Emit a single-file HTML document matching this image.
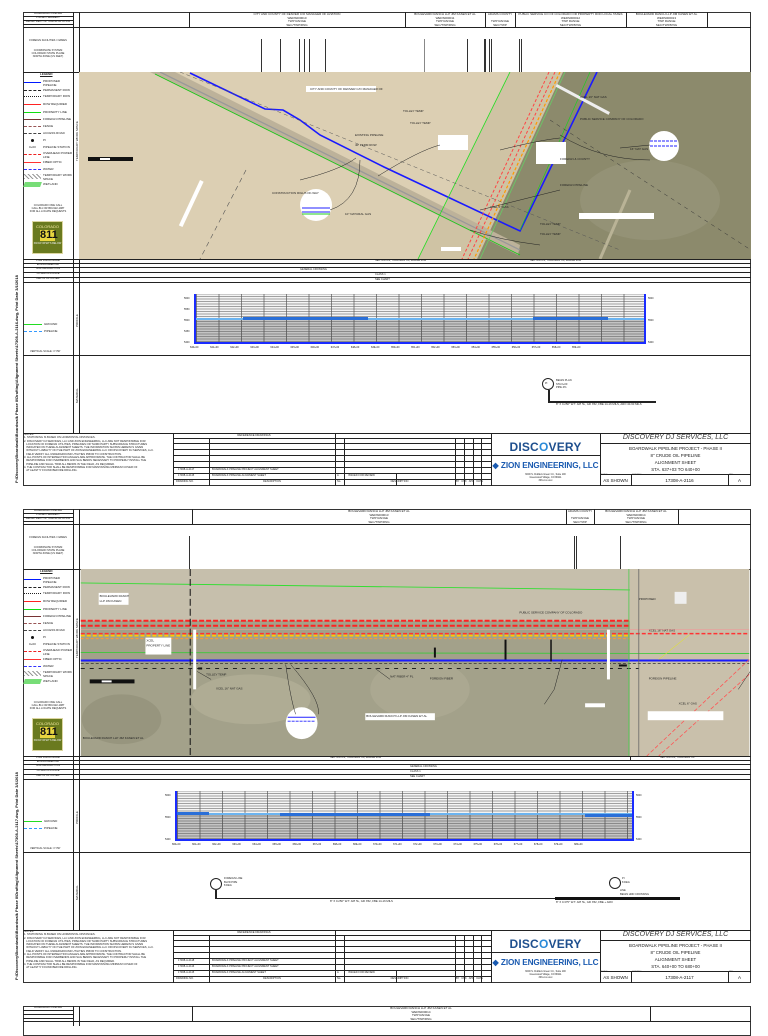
<!DOCTYPE html>
<html><head><meta charset="utf-8">
<style>
*{margin:0;padding:0;box-sizing:border-box}
body{width:768px;height:1024px;background:#fff;position:relative;overflow:hidden;font-family:"Liberation Sans",sans-serif;color:#111}
.sh{position:absolute;left:0;width:768px;height:480px}
.a{position:absolute}
.hl{position:absolute;height:0;border-top:1px solid #222}
.vl{position:absolute;width:0;border-left:1px solid #222}
.t{position:absolute;font-size:3px;line-height:3.6px;white-space:nowrap;color:#222}
.c{text-align:center}
.frame{position:absolute;left:23px;top:1px;width:728px;height:474px;border:1.5px solid #333}
.prof{position:absolute;height:50px;background:
 repeating-linear-gradient(90deg,rgba(0,0,0,.45) 0 1px,transparent 1px 22.5px),
 linear-gradient(#f4f4f4 0 50%,#c4c4c4 50% 100%);border-left:2px solid #1a2cff;border-right:2px solid #1a2cff;border-bottom:2px solid #1a2cff}
.prof:before{content:"";position:absolute;inset:0;background:repeating-linear-gradient(0deg,rgba(90,90,90,.55) 0 1px,transparent 1px 2.5px)}
.disc{font-weight:bold;color:#1e4f8e;font-size:12px;letter-spacing:.2px;white-space:nowrap}
.zion{font-weight:bold;color:#1a5ab0;font-size:8.2px;white-space:nowrap;letter-spacing:-.1px}
.rot{position:absolute;transform:rotate(-90deg);transform-origin:left top;font-size:3px;white-space:nowrap}
</style></head><body>

<!-- ===================== SHEET 1 ===================== -->
<div class="sh" style="top:11px">
 <div class="frame"></div>
 <div class="vl" style="left:73px;top:1px;height:421px"></div>
 <div class="vl" style="left:79px;top:1px;height:421px"></div>
 <div class="hl" style="left:23px;top:16px;width:728px"></div>
 <div class="hl" style="left:23px;top:61px;width:728px"></div>
 <div class="hl" style="left:23px;top:248px;width:728px;border-top-width:1.5px"></div>
 <div class="hl" style="left:23px;top:252px;width:728px"></div>
 <div class="hl" style="left:23px;top:256px;width:728px"></div>
 <div class="hl" style="left:23px;top:261px;width:728px"></div>
 <div class="hl" style="left:23px;top:266px;width:728px"></div>
 <div class="hl" style="left:23px;top:271px;width:728px;border-top-width:1.5px"></div>
 <div class="hl" style="left:23px;top:344px;width:728px;border-top-width:1.5px"></div>
 <div class="hl" style="left:23px;top:422px;width:728px;border-top-width:1.5px"></div>
 <div class="hl" style="left:23px;top:5px;width:50px"></div>
 <div class="hl" style="left:23px;top:9px;width:50px"></div>
 <div class="hl" style="left:23px;top:13px;width:50px"></div>
 <div class="t c" style="left:23px;top:1px;width:50px;font-size:2.5px">BOARDWALK PIPELINE</div>
 <div class="t c" style="left:23px;top:5px;width:50px;font-size:2.5px">PHASE II SEGMENT</div>
 <div class="t c" style="left:23px;top:9px;width:50px;font-size:2.5px">DEPARTMENT OF TRANSPORTATION</div>
 <div class="t c" style="left:23px;top:28px;width:50px;font-size:2.6px">FOREIGN FACILITIES / NAMES</div>
 <div class="t c" style="left:23px;top:38px;width:50px;font-size:2.6px;line-height:3.2px">COORDINATE SYSTEM<br>COLORADO STATE PLANE<br>NORTH ZONE (US FEET)</div>
 <div class="vl" style="left:189px;top:1px;height:15px"></div>
 <div class="vl" style="left:405px;top:1px;height:15px"></div>
 <div class="vl" style="left:485px;top:1px;height:15px"></div>
 <div class="vl" style="left:515px;top:1px;height:15px"></div>
 <div class="vl" style="left:626px;top:1px;height:15px"></div>
 <div class="vl" style="left:707px;top:1px;height:15px"></div>
 <div class="t c" style="left:189px;top:2px;width:216px">CITY AND COUNTY OF DENVER C/O MANAGER OF AVIATION<br>WEDS000010<br>TWP RANGE<br>SEC/TWP/RNG</div>
 <div class="t c" style="left:405px;top:2px;width:80px">BOULEVARD RANCH LLP JIM KASEN ET AL<br>WEDS000011<br>TWP RANGE<br>SEC/TWP/RNG</div>
 <div class="t c" style="left:485px;top:2px;width:30px">ADAMS COUNTY<br><br>TWP RANGE<br>SEC/TWP</div>
 <div class="t c" style="left:515px;top:2px;width:111px">PUBLIC SERVICE CO OF COLORADO OR PROPERTY ROD LOCAL TAXES<br>WEDS000012<br>TWP RANGE<br>SEC/TWP/RNG</div>
 <div class="t c" style="left:626px;top:2px;width:81px">BOULEVARD RANCH LLP JIM KASEN ET AL<br>WEDS000013<br>TWP RANGE<br>SEC/TWP/RNG</div>
 <div class="a" style="left:261px;top:28px;width:1px;height:33px;background:#333"></div>
 <div class="a" style="left:280px;top:28px;width:1px;height:33px;background:#333"></div>
 <div class="a" style="left:299px;top:28px;width:1px;height:33px;background:#333"></div>
 <div class="a" style="left:304px;top:28px;width:1px;height:33px;background:#333"></div>
 <div class="a" style="left:309px;top:28px;width:1px;height:33px;background:#333"></div>
 <div class="a" style="left:325px;top:28px;width:1px;height:33px;background:#333"></div>
 <div class="a" style="left:424px;top:28px;width:1px;height:33px;background:#888"></div>
 <div class="a" style="left:467px;top:28px;width:1px;height:33px;background:#333"></div>
 <div class="a" style="left:484px;top:28px;width:2px;height:33px;background:#333"></div>
 <div class="a" style="left:489px;top:28px;width:4px;height:33px;background:repeating-linear-gradient(90deg,#333 0 1px,transparent 1px 2px)"></div>
 <div class="a" style="left:519px;top:28px;width:4px;height:33px;background:repeating-linear-gradient(90deg,#333 0 1px,transparent 1px 2px)"></div>
 <div class="t" style="left:40px;top:62px;font-weight:bold;text-decoration:underline">LEGEND</div>
 <div class="a" style="left:24px;top:71px;width:17px;height:1px;background:#0018ff"></div><div class="t" style="left:43px;top:69px">PROPOSED<br>PIPELINE</div>
 <div class="a" style="left:24px;top:79px;width:17px;height:1px;border-top:1px dashed #222"></div><div class="t" style="left:43px;top:78px">PERMANENT ROW</div>
 <div class="a" style="left:24px;top:85px;width:17px;height:1px;border-top:1px dotted #222"></div><div class="t" style="left:43px;top:84px">TEMPORARY ROW</div>
 <div class="a" style="left:24px;top:93px;width:17px;height:1px;background:#f22"></div><div class="t" style="left:43px;top:92px">ROW REQUIRED</div>
 <div class="a" style="left:24px;top:101px;width:17px;height:1px;background:#1d1"></div><div class="t" style="left:43px;top:100px">PROPERTY LINE</div>
 <div class="a" style="left:24px;top:108px;width:17px;height:1px;background:#733"></div><div class="t" style="left:43px;top:107px">FOREIGN PIPELINE</div>
 <div class="a" style="left:24px;top:115px;width:17px;height:1px;border-top:1px dashed #955"></div><div class="t" style="left:43px;top:114px">FENCE</div>
 <div class="a" style="left:24px;top:122px;width:17px;height:1px;border-top:1px dashed #444"></div><div class="t" style="left:43px;top:121px">ACCESS ROAD</div>
 <div class="a" style="left:31px;top:128px;width:3px;height:3px;background:#111;border-radius:50%"></div><div class="t" style="left:43px;top:128px">PI</div>
 <div class="t" style="left:29px;top:135px">0+00</div><div class="t" style="left:43px;top:135px">PIPELINE STATION</div>
 <div class="a" style="left:24px;top:143px;width:17px;height:1px;border-top:1px dashed #e22"></div><div class="t" style="left:43px;top:141px">OVERHEAD POWER<br>LINE</div>
 <div class="a" style="left:24px;top:151px;width:17px;height:1px;border-top:1px solid #f33"></div><div class="t" style="left:43px;top:150px">FIBER OPTIC</div>
 <div class="a" style="left:24px;top:158px;width:17px;height:1px;border-top:1px dashed #33f"></div><div class="t" style="left:43px;top:157px">WATER</div>
 <div class="a" style="left:24px;top:163px;width:17px;height:5px;background:repeating-linear-gradient(45deg,#999 0 1px,#fff 1px 3px)"></div><div class="t" style="left:43px;top:163px">TEMPORARY WORK<br>SPACE</div>
 <div class="a" style="left:24px;top:171px;width:17px;height:5px;background:#7d7;transform:skewX(-20deg)"></div><div class="t" style="left:43px;top:172px">WETLAND</div>
 <div class="t c" style="left:23px;top:193px;width:50px;font-size:2.6px;line-height:3.2px">COLORADO ONE CALL<br>CALL 811 OR 800-922-1987<br>FOR ALL LOCATE REQUESTS</div>
 <div class="a" style="left:32px;top:210px;width:31px;height:33px;background:#6a7a1f;border:1px solid #dcd6a0;color:#fff;text-align:center">
  <div style="font-size:4px;margin-top:2px;color:#f3e9a0">COLORADO</div>
  <div style="font-size:11px;font-weight:bold;color:#111;background:#e8d640;margin:1px 7px;line-height:11px">811</div>
  <div style="font-size:2.5px;color:#eee">KNOW WHAT'S BELOW</div>
 </div>
 <div class="rot" style="left:75px;top:150px">TEMPORARY WORK SPACE</div>
 <svg class="a" style="left:79px;top:61px" width="672" height="187" viewBox="79 72 672 187">
  <rect x="79" y="72" width="672" height="187" fill="#dccfb3"/>
  <polygon points="510,72 751,72 751,259 418,259" fill="#cfc3a4"/>
  <polygon points="563,72 751,72 751,259 477,259" fill="#8c8a6c"/>
  <ellipse cx="650" cy="200" rx="70" ry="40" fill="#97957a" opacity=".7"/>
  <line x1="630" y1="190" x2="600" y2="259" stroke="#b9b396" stroke-width="3"/>
  <polygon points="150,72 175,72 520,245 518,255" fill="#bdb29a"/>
  <line x1="160" y1="72" x2="520" y2="250" stroke="#999" stroke-width="1.3"/>
  <line x1="155" y1="74" x2="520" y2="255" stroke="#1c1" stroke-width=".8"/>
  <polyline points="190,73 265,109 283,110 300,120 320,135 384,167 520,231 597,72" fill="none" stroke="#1a1aff" stroke-width="1.6"/>
  <line x1="510" y1="72" x2="418" y2="259" stroke="#2d2" stroke-width=".8"/>
  <line x1="549" y1="72" x2="462" y2="259" stroke="#f44" stroke-width="1" stroke-dasharray="3 2"/>
  <line x1="555" y1="72" x2="468" y2="259" stroke="#f44" stroke-width="1" stroke-dasharray="3 2"/>
  <line x1="560" y1="72" x2="474" y2="259" stroke="#f90" stroke-width="1.2" stroke-dasharray="3 2"/>
  <line x1="565" y1="72" x2="480" y2="259" stroke="#6c6" stroke-width=".8"/>
  <line x1="590" y1="72" x2="520" y2="230" stroke="#2c2" stroke-width=".7"/>
  <line x1="550" y1="120" x2="751" y2="250" stroke="#333" stroke-width=".5" stroke-dasharray="4 4"/>
  <line x1="246" y1="170" x2="200" y2="259" stroke="#555" stroke-width=".6" stroke-dasharray="5 4"/>
  <line x1="180" y1="72" x2="620" y2="250" stroke="#555" stroke-width=".5" stroke-dasharray="4 3"/>
  <rect x="557" y="84" width="60" height="3" fill="#eee" transform="rotate(28 557 84)"/>
  <circle cx="316" cy="205" r="16" fill="#fff"/>
  <line x1="302" y1="208" x2="330" y2="208" stroke="#22f" stroke-width="1"/>
  <line x1="302" y1="212" x2="330" y2="212" stroke="#22f" stroke-width="1"/>
  <line x1="302" y1="214" x2="330" y2="214" stroke="#2c2" stroke-width="1"/>
  <circle cx="664" cy="146" r="15" fill="#fff"/>
  <line x1="650" y1="141" x2="678" y2="141" stroke="#22f" stroke-width="1" stroke-dasharray="3 1"/>
  <line x1="650" y1="146" x2="678" y2="146" stroke="#22f" stroke-width="1" stroke-dasharray="3 1"/>
  <rect x="88" y="157" width="45" height="4" fill="#111"/>
  <rect x="100" y="158" width="10" height="2" fill="#fff"/>
  <rect x="306" y="86" width="70" height="6" fill="#fff"/>
  <rect x="438" y="135" width="30" height="15" fill="#fff"/>
  <rect x="536" y="142" width="30" height="22" fill="#fff"/>
  <rect x="579" y="213" width="75" height="6" fill="#fff"/>
  <rect x="441" y="247" width="20" height="4" fill="#fff"/>
  <rect x="200" y="180" width="4" height="50" fill="#fff" transform="rotate(25 200 180)"/>
  <g stroke="#222" stroke-width=".5" fill="none">
   <path d="M300 180 Q340 170 356 158"/><path d="M330 210 Q360 200 360 160"/>
   <path d="M378 176 Q420 150 440 145"/><path d="M500 150 Q540 140 560 138"/>
   <path d="M560 135 Q600 160 650 160"/><path d="M620 148 L650 145"/>
   <path d="M480 210 Q520 200 560 190"/><path d="M470 230 Q500 240 540 245"/>
  </g>
  <g font-size="3" fill="#222" font-family="Liberation Sans">
   <text x="310" y="90">CITY AND COUNTY OF DENVER C/O MANAGER OF</text>
   <text x="403" y="112">TOLLEY TEMP</text><text x="410" y="124">TOLLEY TEMP</text>
   <text x="355" y="136">EXISTING PIPELINE</text><text x="355" y="146">40' PERM ROW</text>
   <text x="272" y="194">CONSTRUCTION RIGHT-OF-WAY</text><text x="345" y="215">10" NATURAL GAS</text>
   <text x="580" y="98">XCEL 16" NAT GAS</text><text x="580" y="120">PUBLIC SERVICE COMPANY OF COLORADO</text>
   <text x="560" y="160">FOREIGN &amp; COUNTY</text><text x="560" y="186">FOREIGN PIPELINE</text>
   <text x="540" y="225">TOLLEY TEMP</text><text x="540" y="235">TOLLEY TEMP</text>
   <text x="490" y="208">XCEL 6" GAS</text><text x="630" y="150">16" NAT GAS</text>
  </g>
 </svg>
 <div class="t c" style="left:23px;top:248px;width:50px;font-size:2.6px">PIPE DISCLOSURE</div>
 <div class="t c" style="left:23px;top:252px;width:50px;font-size:2.6px">ENVIRONMENTAL</div>
 <div class="t c" style="left:23px;top:256px;width:50px;font-size:2.6px">SOIL DESCRIPTION</div>
 <div class="t c" style="left:23px;top:261px;width:50px;font-size:2.6px">COVER DISTANCE</div>
 <div class="t c" style="left:23px;top:266px;width:50px;font-size:2.6px">DEPTH OF COVER</div>
 <div class="t" style="left:375px;top:248px;font-size:2.6px">SECTION 22, TOWNSHIP 3S, RANGE 66W</div>
 <div class="t" style="left:530px;top:248px;font-size:2.6px">SECTION 23, TOWNSHIP 3S, RANGE 66W</div>
 <div class="t" style="left:300px;top:257px;font-size:2.6px">GENERAL CROSSING</div>
 <div class="t" style="left:375px;top:262px;font-size:2.6px">CLASS 1</div>
 <div class="t" style="left:375px;top:267px;font-size:2.6px">SEE CHART</div>
 <div class="a" style="left:24px;top:313px;width:18px;height:1px;background:#2d2"></div><div class="t" style="left:44px;top:312px">GROUND</div>
 <div class="a" style="left:24px;top:320px;width:18px;height:1px;border-top:1.5px dashed #39f"></div><div class="t" style="left:44px;top:319px">PIPELINE</div>
 <div class="t" style="left:30px;top:339px;font-size:2.6px">VERTICAL SCALE: 1"=50'</div>
 <div class="rot" style="left:75px;top:316px">PROFILE</div>
 <div class="prof" style="left:194px;top:283px;width:452px"></div>
 <div class="a" style="left:196px;top:307px;width:448px;height:2px;background:#6cb4f0"></div>
 <div class="a" style="left:243px;top:306px;width:125px;height:2.5px;background:#2a6fd8"></div>
 <div class="a" style="left:533px;top:306px;width:75px;height:2.5px;background:#2a6fd8"></div>
 <div class="t" style="left:184px;top:286px;font-size:2.5px">5600</div><div class="t" style="left:184px;top:297px;font-size:2.5px">5550</div>
 <div class="t" style="left:184px;top:308px;font-size:2.5px">5500</div><div class="t" style="left:184px;top:319px;font-size:2.5px">5450</div>
 <div class="t" style="left:184px;top:330px;font-size:2.5px">5400</div>
 <div class="t" style="left:648px;top:286px;font-size:2.5px">5600</div><div class="t" style="left:648px;top:308px;font-size:2.5px">5500</div><div class="t" style="left:648px;top:330px;font-size:2.5px">5400</div>
 <div class="a" style="left:190px;top:335px;width:460px;font-size:2.5px;word-spacing:11px;white-space:nowrap">640+00 641+00 642+00 643+00 644+00 645+00 646+00 647+00 648+00 649+00 650+00 651+00 652+00 653+00 654+00 655+00 656+00 657+00 658+00 659+00</div>
 <div class="rot" style="left:75px;top:392px">MATERIAL</div>
 <div class="a" style="left:542px;top:367px;width:12px;height:12px;border:1.3px solid #222;border-radius:50%;background:#fff"></div>
 <div class="t" style="left:545px;top:371px;font-size:2.5px">PI</div>
 <div class="t" style="left:556px;top:368px;font-size:2.6px">BEGIN PLAN<br>STA 0+00<br>PIPE 4%</div>
 <div class="a" style="left:548px;top:379px;width:1.5px;height:12px;background:#222"></div>
 <div class="a" style="left:548px;top:390px;width:108px;height:1.5px;background:#222"></div>
 <div class="t" style="left:556px;top:392px;font-size:2.8px">8" X 0.250" W.T. API 5L, GR X52, FBE 14-16 MILS, ARO 40-60 MILS</div>
 <div class="vl" style="left:173px;top:422px;height:53px"></div>
 <div class="vl" style="left:209px;top:427px;height:48px"></div>
 <div class="vl" style="left:335px;top:422px;height:53px"></div>
 <div class="vl" style="left:344px;top:427px;height:48px"></div>
 <div class="vl" style="left:396px;top:462px;height:13px"></div>
 <div class="vl" style="left:455px;top:427px;height:48px"></div>
 <div class="vl" style="left:464px;top:427px;height:48px"></div>
 <div class="vl" style="left:473px;top:427px;height:48px"></div>
 <div class="vl" style="left:481px;top:427px;height:48px"></div>
 <div class="vl" style="left:491px;top:422px;height:53px;border-left-width:1.5px"></div>
 <div class="vl" style="left:600px;top:422px;height:53px;border-left-width:1.5px"></div>
 <div class="hl" style="left:173px;top:427px;width:318px"></div>
 <div class="hl" style="left:173px;top:432px;width:318px"></div>
 <div class="hl" style="left:173px;top:438px;width:318px"></div>
 <div class="hl" style="left:173px;top:444px;width:318px"></div>
 <div class="hl" style="left:173px;top:450px;width:318px"></div>
 <div class="hl" style="left:173px;top:456px;width:318px"></div>
 <div class="hl" style="left:173px;top:462px;width:318px"></div>
 <div class="hl" style="left:173px;top:468px;width:318px"></div>
 <div class="t" style="left:24px;top:422px;font-size:2.7px;line-height:3.3px">NOTES:<br>1. STATIONING IS BASED ON HORIZONTAL DISTANCES.<br>2. DISCOVERY DJ SERVICES, LLC AND ZION ENGINEERING, LLC ARE NOT RESPONSIBLE FOR<br>&nbsp;&nbsp;&nbsp;LOCATION OF FOREIGN UTILITIES, PIPELINES OR THIRD PARTY SUBSURFACE STRUCTURES<br>&nbsp;&nbsp;&nbsp;INDICATED ON THESE ALIGNMENT SHEETS. THE INFORMATION SHOWN HEREIN IS GIVEN<br>&nbsp;&nbsp;&nbsp;WITHOUT LIABILITY ON THE PART OF ZION ENGINEERING LLC OR DISCOVERY DJ SERVICES, LLC.<br>&nbsp;&nbsp;&nbsp;FIELD VERIFY ALL UNDERGROUND UTILITIES PRIOR TO CONSTRUCTION.<br>3. ALL POINTS OF INTERSECTION ANGLES ARE APPROXIMATE. THE CONTRACTOR SHALL BE<br>&nbsp;&nbsp;&nbsp;RESPONSIBLE FOR OVERBENDS AND SAG BENDS NECESSARY TO PROPERLY INSTALL THE<br>&nbsp;&nbsp;&nbsp;PIPELINE AND SHALL TRIM ALL BENDS IN THE FIELD, AS REQUIRED.<br>4. THE CONTRACTOR SHALL BE RESPONSIBLE FOR MAINTAINING MINIMUM COVER OF<br>&nbsp;&nbsp;&nbsp;AT LEAST 5' FOUND BEFORE DRILLING.</div>
 <div class="t c" style="left:173px;top:423px;width:162px;font-size:2.8px">REFERENCE DRAWINGS</div>
 <div class="t" style="left:178px;top:457px;font-size:2.6px">17308-A-2117</div><div class="t" style="left:212px;top:457px;font-size:2.6px">BOARDWALK PIPELINE PROJECT ALIGNMENT SHEET</div>
 <div class="t" style="left:178px;top:463px;font-size:2.6px">17308-A-2115</div><div class="t" style="left:212px;top:463px;font-size:2.6px">BOARDWALK PIPELINE ALIGNMENT SHEET</div>
 <div class="t" style="left:176px;top:469px;font-size:2.6px">DRAWING NO.</div><div class="t c" style="left:209px;top:469px;width:126px;font-size:2.6px">DESCRIPTION</div>
 <div class="t" style="left:337px;top:463px;font-size:2.6px">A</div><div class="t" style="left:348px;top:463px;font-size:2.6px">ISSUED FOR REVIEW</div>
 <div class="t" style="left:337px;top:469px;font-size:2.6px">No.</div><div class="t c" style="left:344px;top:469px;width:111px;font-size:2.6px">DESCRIPTION</div>
 <div class="t" style="left:456px;top:469px;font-size:2.5px">BY &nbsp;&nbsp;CHK &nbsp;&nbsp;APP &nbsp;&nbsp;&nbsp;DATE</div>
 <div class="hl" style="left:491px;top:444px;width:109px"></div>
 <div class="a disc" style="left:491px;top:429px;width:109px;text-align:center">DISC<span style="color:#2a8ad8">O</span>VERY</div>
 <div class="a zion" style="left:491px;top:449px;width:109px;text-align:center"><span style="color:#1a5ab0">&#9670;</span> ZION ENGINEERING, LLC</div>
 <div class="t c" style="left:491px;top:462px;width:109px;font-size:2.4px;line-height:3px">6000 S. Fiddlers Green Cir., Suite 100<br>Greenwood Village, CO 80111<br>303-xxx-xxxx</div>
 <div class="hl" style="left:600px;top:432px;width:151px"></div>
 <div class="hl" style="left:600px;top:463px;width:151px"></div>
 <div class="vl" style="left:631px;top:463px;height:12px"></div>
 <div class="vl" style="left:728px;top:463px;height:12px"></div>
 <div class="a" style="left:600px;top:423px;width:151px;text-align:center;font-size:7px;font-style:italic;color:#333">DISCOVERY DJ SERVICES, LLC</div>
 <div class="a" style="left:600px;top:434px;width:151px;text-align:center;font-size:4.4px;line-height:7px;color:#222">BOARDWALK PIPELINE PROJECT - PHASE II<br>8" CRUDE OIL PIPELINE<br>ALIGNMENT SHEET<br>STA. 637+03 TO 640+00</div>
 <div class="t" style="left:601px;top:463px;font-size:2px">SCALE</div><div class="t" style="left:632px;top:463px;font-size:2px">DRAWING</div><div class="t" style="left:729px;top:463px;font-size:2px">REV</div>
 <div class="a" style="left:600px;top:467px;width:31px;text-align:center;font-size:4.5px">AS SHOWN</div>
 <div class="a" style="left:631px;top:467px;width:97px;text-align:center;font-size:4.5px">17308-A-2116</div>
 <div class="a" style="left:728px;top:467px;width:23px;text-align:center;font-size:4.5px">A</div>
 <div class="rot" style="left:14px;top:472px;font-size:4px;font-weight:bold">P:\Discovery\Boardwalk\Boardwalk Phase II\Drafting\Alignment Sheets\17308-A-2116.dwg, Print Date 3/1/2018</div>
</div>

<!-- ===================== SHEET 2 ===================== -->
<div class="sh" style="top:508px">
 <div class="frame"></div>
 <div class="vl" style="left:73px;top:1px;height:421px"></div>
 <div class="vl" style="left:79px;top:1px;height:421px"></div>
 <div class="hl" style="left:23px;top:16px;width:728px"></div>
 <div class="hl" style="left:23px;top:61px;width:728px"></div>
 <div class="hl" style="left:23px;top:248px;width:728px;border-top-width:1.5px"></div>
 <div class="hl" style="left:23px;top:252px;width:728px"></div>
 <div class="hl" style="left:23px;top:256px;width:728px"></div>
 <div class="hl" style="left:23px;top:261px;width:728px"></div>
 <div class="hl" style="left:23px;top:266px;width:728px"></div>
 <div class="hl" style="left:23px;top:271px;width:728px;border-top-width:1.5px"></div>
 <div class="hl" style="left:23px;top:344px;width:728px;border-top-width:1.5px"></div>
 <div class="hl" style="left:23px;top:422px;width:728px;border-top-width:1.5px"></div>
 <div class="hl" style="left:23px;top:5px;width:50px"></div>
 <div class="hl" style="left:23px;top:9px;width:50px"></div>
 <div class="hl" style="left:23px;top:13px;width:50px"></div>
 <div class="t c" style="left:23px;top:1px;width:50px;font-size:2.5px">BOARDWALK PIPELINE</div>
 <div class="t c" style="left:23px;top:5px;width:50px;font-size:2.5px">PHASE II SEGMENT</div>
 <div class="t c" style="left:23px;top:9px;width:50px;font-size:2.5px">DEPARTMENT OF TRANSPORTATION</div>
 <div class="t c" style="left:23px;top:28px;width:50px;font-size:2.6px">FOREIGN FACILITIES / NAMES</div>
 <div class="t c" style="left:23px;top:38px;width:50px;font-size:2.6px;line-height:3.2px">COORDINATE SYSTEM<br>COLORADO STATE PLANE<br>NORTH ZONE (US FEET)</div>
 <div class="vl" style="left:192px;top:1px;height:15px"></div>
 <div class="vl" style="left:566px;top:1px;height:15px"></div>
 <div class="vl" style="left:594px;top:1px;height:15px"></div>
 <div class="vl" style="left:678px;top:1px;height:15px"></div>
 <div class="t c" style="left:192px;top:2px;width:374px">BOULEVARD RANCH LLP JIM KASEN ET AL<br>WEDS000013<br>TWP RANGE<br>SEC/TWP/RNG</div>
 <div class="t c" style="left:566px;top:2px;width:28px">ADAMS COUNTY<br><br>TWP RANGE<br>SEC/TWP</div>
 <div class="t c" style="left:594px;top:2px;width:84px">BOULEVARD RANCH LLP JIM KASEN ET AL<br>WEDS000014<br>TWP RANGE<br>SEC/TWP/RNG</div>
 <div class="a" style="left:574px;top:28px;width:4px;height:33px;background:repeating-linear-gradient(90deg,#333 0 1px,transparent 1px 2px)"></div>
 <div class="a" style="left:620px;top:28px;width:1px;height:33px;background:#333"></div>
 <div class="a" style="left:189px;top:28px;width:1px;height:33px;background:#333"></div>
 <div class="t" style="left:40px;top:62px;font-weight:bold;text-decoration:underline">LEGEND</div>
 <div class="a" style="left:24px;top:71px;width:17px;height:1px;background:#0018ff"></div><div class="t" style="left:43px;top:69px">PROPOSED<br>PIPELINE</div>
 <div class="a" style="left:24px;top:79px;width:17px;height:1px;border-top:1px dashed #222"></div><div class="t" style="left:43px;top:78px">PERMANENT ROW</div>
 <div class="a" style="left:24px;top:85px;width:17px;height:1px;border-top:1px dotted #222"></div><div class="t" style="left:43px;top:84px">TEMPORARY ROW</div>
 <div class="a" style="left:24px;top:93px;width:17px;height:1px;background:#f22"></div><div class="t" style="left:43px;top:92px">ROW REQUIRED</div>
 <div class="a" style="left:24px;top:101px;width:17px;height:1px;background:#1d1"></div><div class="t" style="left:43px;top:100px">PROPERTY LINE</div>
 <div class="a" style="left:24px;top:108px;width:17px;height:1px;background:#733"></div><div class="t" style="left:43px;top:107px">FOREIGN PIPELINE</div>
 <div class="a" style="left:24px;top:115px;width:17px;height:1px;border-top:1px dashed #955"></div><div class="t" style="left:43px;top:114px">FENCE</div>
 <div class="a" style="left:24px;top:122px;width:17px;height:1px;border-top:1px dashed #444"></div><div class="t" style="left:43px;top:121px">ACCESS ROAD</div>
 <div class="a" style="left:31px;top:128px;width:3px;height:3px;background:#111;border-radius:50%"></div><div class="t" style="left:43px;top:128px">PI</div>
 <div class="t" style="left:29px;top:135px">0+00</div><div class="t" style="left:43px;top:135px">PIPELINE STATION</div>
 <div class="a" style="left:24px;top:143px;width:17px;height:1px;border-top:1px dashed #e22"></div><div class="t" style="left:43px;top:141px">OVERHEAD POWER<br>LINE</div>
 <div class="a" style="left:24px;top:151px;width:17px;height:1px;border-top:1px solid #f33"></div><div class="t" style="left:43px;top:150px">FIBER OPTIC</div>
 <div class="a" style="left:24px;top:158px;width:17px;height:1px;border-top:1px dashed #33f"></div><div class="t" style="left:43px;top:157px">WATER</div>
 <div class="a" style="left:24px;top:163px;width:17px;height:5px;background:repeating-linear-gradient(45deg,#999 0 1px,#fff 1px 3px)"></div><div class="t" style="left:43px;top:163px">TEMPORARY WORK<br>SPACE</div>
 <div class="a" style="left:24px;top:171px;width:17px;height:5px;background:#7d7;transform:skewX(-20deg)"></div><div class="t" style="left:43px;top:172px">WETLAND</div>
 <div class="t c" style="left:23px;top:193px;width:50px;font-size:2.6px;line-height:3.2px">COLORADO ONE CALL<br>CALL 811 OR 800-922-1987<br>FOR ALL LOCATE REQUESTS</div>
 <div class="a" style="left:32px;top:210px;width:31px;height:33px;background:#6a7a1f;border:1px solid #dcd6a0;color:#fff;text-align:center">
  <div style="font-size:4px;margin-top:2px;color:#f3e9a0">COLORADO</div>
  <div style="font-size:11px;font-weight:bold;color:#111;background:#e8d640;margin:1px 7px;line-height:11px">811</div>
  <div style="font-size:2.5px;color:#eee">KNOW WHAT'S BELOW</div>
 </div>
 <div class="rot" style="left:75px;top:150px">TEMPORARY WORK SPACE</div>
 <svg class="a" style="left:79px;top:61px" width="672" height="187" viewBox="79 569 672 188">
  <rect x="79" y="569" width="672" height="188" fill="#a3a18a"/>
  <rect x="79" y="569" width="552" height="52" fill="#c6bfac"/>
  <rect x="631" y="569" width="120" height="188" fill="#c9c0ab"/>
  <ellipse cx="250" cy="700" rx="60" ry="25" fill="#b3b099" opacity=".7"/>
  <ellipse cx="420" cy="690" rx="50" ry="30" fill="#b0ae96" opacity=".6"/>
  <ellipse cx="120" cy="720" rx="40" ry="25" fill="#8f8e76" opacity=".6"/>
  <line x1="79" y1="583" x2="631" y2="590" stroke="#3d3" stroke-width=".9"/>
  <line x1="79" y1="621" x2="631" y2="621" stroke="#f22" stroke-width="2" stroke-dasharray="5 2"/>
  <line x1="79" y1="626" x2="631" y2="626" stroke="#f22" stroke-width="2" stroke-dasharray="5 2"/>
  <line x1="79" y1="630" x2="751" y2="630" stroke="#e99" stroke-width=".7"/>
  <line x1="79" y1="634" x2="751" y2="634" stroke="#f33" stroke-width="1.5" stroke-dasharray="4 2"/>
  <line x1="79" y1="636" x2="631" y2="636" stroke="#fc0" stroke-width="1.8" stroke-dasharray="4 2"/>
  <line x1="79" y1="639" x2="631" y2="639" stroke="#f93" stroke-width="1" stroke-dasharray="3 2"/>
  <line x1="79" y1="653" x2="751" y2="654" stroke="#3c3" stroke-width=".8"/>
  <line x1="79" y1="661" x2="751" y2="661" stroke="#1a1aff" stroke-width="2"/>
  <line x1="79" y1="664" x2="751" y2="664" stroke="#333" stroke-width=".8" stroke-dasharray="3 2"/>
  <line x1="79" y1="669" x2="640" y2="669" stroke="#222" stroke-width="1" stroke-dasharray="4 5"/>
  <line x1="189" y1="569" x2="189" y2="757" stroke="#111" stroke-width="1" stroke-dasharray="7 3"/>
  <line x1="630" y1="569" x2="630" y2="757" stroke="#5c5" stroke-width=".8"/>
  <line x1="640" y1="569" x2="640" y2="757" stroke="#666" stroke-width=".8"/>
  <line x1="751" y1="660" x2="648" y2="757" stroke="#f55" stroke-width=".8" stroke-dasharray="4 2"/>
  <line x1="751" y1="675" x2="660" y2="757" stroke="#f55" stroke-width=".8" stroke-dasharray="4 2"/>
  <line x1="691" y1="635" x2="660" y2="660" stroke="#dd4" stroke-width=".6"/>
  <rect x="676" y="592" width="12" height="12" fill="#eee"/>
  <circle cx="301" cy="724" r="16" fill="#fff"/>
  <line x1="287" y1="718" x2="315" y2="718" stroke="#22f" stroke-width="1"/>
  <line x1="287" y1="722" x2="315" y2="722" stroke="#22f" stroke-width="1" stroke-dasharray="3 1"/>
  <rect x="97" y="593" width="30" height="12" fill="#fff"/>
  <rect x="144" y="638" width="26" height="17" fill="#fff"/>
  <rect x="192" y="630" width="3" height="60" fill="#fff"/>
  <rect x="608" y="630" width="3" height="50" fill="#fff"/>
  <rect x="365" y="714" width="70" height="7" fill="#fff"/>
  <rect x="649" y="712" width="76" height="9" fill="#fff"/>
  <rect x="586" y="704" width="20" height="4" fill="#fff"/>
  <rect x="88" y="680" width="45" height="4" fill="#111"/>
  <rect x="100" y="681" width="10" height="2" fill="#fff"/>
  <g stroke="#222" stroke-width=".5" fill="none">
   <path d="M285 665 Q290 700 295 715"/><path d="M290 665 Q320 700 318 715"/>
   <path d="M196 672 L210 680"/><path d="M375 669 L390 680"/>
   <path d="M563 660 L555 690 L545 705"/><path d="M760 660 L740 690"/>
  </g>
  <g fill="#111"><rect x="197" y="668" width="4" height="2"/><rect x="434" y="648" width="2" height="10"/><rect x="505" y="640" width="2" height="20"/><rect x="551" y="640" width="1.5" height="22"/><rect x="620" y="665" width="8" height="2"/></g>
  <g font-size="3" fill="#222" font-family="Liberation Sans">
   <text x="98" y="597">BOULEVARD RANCH</text><text x="98" y="602">LLP JIM KASEN</text>
   <text x="145" y="642">XCEL</text><text x="145" y="647">PROPERTY LINE</text>
   <text x="205" y="676">TOLLEY TEMP</text><text x="215" y="690">XCEL 16" NAT GAS</text>
   <text x="390" y="678">NAT FIBER 4" PL</text><text x="430" y="680">FOREIGN FIBER</text>
   <text x="520" y="614">PUBLIC SERVICE COMPANY OF COLORADO</text>
   <text x="640" y="600">PROPOSED</text><text x="650" y="632">XCEL 16" NAT GAS</text>
   <text x="650" y="680">FOREIGN PIPELINE</text><text x="680" y="705">XCEL 6" GAS</text>
   <text x="366" y="718">BOULEVARD RANCH LLP JIM KASEN ET AL</text>
   <text x="81" y="740">BOULEVARD RANCH LLP JIM KASEN ET AL</text>
  </g>
 </svg>
 <div class="t c" style="left:23px;top:248px;width:50px;font-size:2.6px">PIPE DISCLOSURE</div>
 <div class="t c" style="left:23px;top:252px;width:50px;font-size:2.6px">ENVIRONMENTAL</div>
 <div class="t c" style="left:23px;top:256px;width:50px;font-size:2.6px">SOIL DESCRIPTION</div>
 <div class="t c" style="left:23px;top:261px;width:50px;font-size:2.6px">COVER DISTANCE</div>
 <div class="t c" style="left:23px;top:266px;width:50px;font-size:2.6px">DEPTH OF COVER</div>
 <div class="vl" style="left:630px;top:248px;height:4px"></div>
 <div class="t" style="left:330px;top:248px;font-size:2.6px">SECTION 23, TOWNSHIP 3S, RANGE 66W</div>
 <div class="t" style="left:660px;top:248px;font-size:2.6px">SECTION 24, TOWNSHIP 3S</div>
 <div class="t" style="left:410px;top:257px;font-size:2.6px">GENERAL CROSSING</div>
 <div class="t" style="left:410px;top:262px;font-size:2.6px">CLASS 1</div>
 <div class="t" style="left:410px;top:267px;font-size:2.6px">SEE CHART</div>
 <div class="a" style="left:24px;top:313px;width:18px;height:1px;background:#2d2"></div><div class="t" style="left:44px;top:312px">GROUND</div>
 <div class="a" style="left:24px;top:320px;width:18px;height:1px;border-top:1.5px dashed #39f"></div><div class="t" style="left:44px;top:319px">PIPELINE</div>
 <div class="t" style="left:30px;top:339px;font-size:2.6px">VERTICAL SCALE: 1"=50'</div>
 <div class="rot" style="left:75px;top:316px">PROFILE</div>
 <div class="prof" style="left:175px;top:283px;width:459px"></div>
 <div class="a" style="left:177px;top:305px;width:455px;height:2px;background:#6cb4f0"></div>
 <div class="a" style="left:177px;top:304px;width:32px;height:2.5px;background:#2a6fd8"></div>
 <div class="a" style="left:280px;top:305px;width:150px;height:2.5px;background:#2a6fd8"></div>
 <div class="a" style="left:585px;top:306px;width:47px;height:2.5px;background:#2a6fd8"></div>
 <div class="t" style="left:636px;top:286px;font-size:2.5px">5600</div><div class="t" style="left:636px;top:308px;font-size:2.5px">5500</div><div class="t" style="left:636px;top:330px;font-size:2.5px">5400</div>
 <div class="t" style="left:165px;top:286px;font-size:2.5px">5600</div><div class="t" style="left:165px;top:308px;font-size:2.5px">5500</div><div class="t" style="left:165px;top:330px;font-size:2.5px">5400</div>
 <div class="a" style="left:172px;top:335px;width:465px;font-size:2.5px;word-spacing:11px;white-space:nowrap">660+00 661+00 662+00 663+00 664+00 665+00 666+00 667+00 668+00 669+00 670+00 671+00 672+00 673+00 674+00 675+00 676+00 677+00 678+00 679+00 680+00</div>
 <div class="rot" style="left:75px;top:392px">MATERIAL</div>
 <div class="a" style="left:210px;top:370px;width:12px;height:12px;border:1.3px solid #222;border-radius:50%;background:#fff"></div>
 <div class="t" style="left:224px;top:369px;font-size:2.6px">FOREIGN LINE<br>BLVD PIPE<br>8 DEG</div>
 <div class="a" style="left:215px;top:382px;width:1.5px;height:9px;background:#222"></div>
 <div class="a" style="left:215px;top:390px;width:348px;height:1.2px;background:#222"></div>
 <div class="a" style="left:555px;top:389px;width:125px;height:3px;background:#111"></div>
 <div class="t" style="left:330px;top:392px;font-size:2.8px">8" X 0.250" W.T. API 5L, GR X52, FBE 14-16 MILS</div>
 <div class="t" style="left:556px;top:393px;font-size:2.8px">8" X 0.375" W.T. API 5L, GR X52, FBE + ARO</div>
 <div class="a" style="left:609px;top:369px;width:12px;height:12px;border:1.3px solid #222;border-radius:50%;background:#fff"></div>
 <div class="t" style="left:622px;top:369px;font-size:2.6px">PI<br>8 DEG</div>
 <div class="t" style="left:620px;top:381px;font-size:2.6px">LINE<br>BEGIN HDD CROSSING</div>
 <div class="vl" style="left:173px;top:422px;height:53px"></div>
 <div class="vl" style="left:209px;top:427px;height:48px"></div>
 <div class="vl" style="left:335px;top:422px;height:53px"></div>
 <div class="vl" style="left:344px;top:427px;height:48px"></div>
 <div class="vl" style="left:396px;top:462px;height:13px"></div>
 <div class="vl" style="left:455px;top:427px;height:48px"></div>
 <div class="vl" style="left:464px;top:427px;height:48px"></div>
 <div class="vl" style="left:473px;top:427px;height:48px"></div>
 <div class="vl" style="left:481px;top:427px;height:48px"></div>
 <div class="vl" style="left:491px;top:422px;height:53px;border-left-width:1.5px"></div>
 <div class="vl" style="left:600px;top:422px;height:53px;border-left-width:1.5px"></div>
 <div class="hl" style="left:173px;top:427px;width:318px"></div>
 <div class="hl" style="left:173px;top:432px;width:318px"></div>
 <div class="hl" style="left:173px;top:438px;width:318px"></div>
 <div class="hl" style="left:173px;top:444px;width:318px"></div>
 <div class="hl" style="left:173px;top:450px;width:318px"></div>
 <div class="hl" style="left:173px;top:456px;width:318px"></div>
 <div class="hl" style="left:173px;top:462px;width:318px"></div>
 <div class="hl" style="left:173px;top:468px;width:318px"></div>
 <div class="t" style="left:24px;top:422px;font-size:2.7px;line-height:3.3px">NOTES:<br>1. STATIONING IS BASED ON HORIZONTAL DISTANCES.<br>2. DISCOVERY DJ SERVICES, LLC AND ZION ENGINEERING, LLC ARE NOT RESPONSIBLE FOR<br>&nbsp;&nbsp;&nbsp;LOCATION OF FOREIGN UTILITIES, PIPELINES OR THIRD PARTY SUBSURFACE STRUCTURES<br>&nbsp;&nbsp;&nbsp;INDICATED ON THESE ALIGNMENT SHEETS. THE INFORMATION SHOWN HEREIN IS GIVEN<br>&nbsp;&nbsp;&nbsp;WITHOUT LIABILITY ON THE PART OF ZION ENGINEERING LLC OR DISCOVERY DJ SERVICES, LLC.<br>&nbsp;&nbsp;&nbsp;FIELD VERIFY ALL UNDERGROUND UTILITIES PRIOR TO CONSTRUCTION.<br>3. ALL POINTS OF INTERSECTION ANGLES ARE APPROXIMATE. THE CONTRACTOR SHALL BE<br>&nbsp;&nbsp;&nbsp;RESPONSIBLE FOR OVERBENDS AND SAG BENDS NECESSARY TO PROPERLY INSTALL THE<br>&nbsp;&nbsp;&nbsp;PIPELINE AND SHALL TRIM ALL BENDS IN THE FIELD, AS REQUIRED.<br>4. THE CONTRACTOR SHALL BE RESPONSIBLE FOR MAINTAINING MINIMUM COVER OF<br>&nbsp;&nbsp;&nbsp;AT LEAST 5' FOUND BEFORE DRILLING.</div>
 <div class="t c" style="left:173px;top:423px;width:162px;font-size:2.8px">REFERENCE DRAWINGS</div>
 <div class="t" style="left:178px;top:451px;font-size:2.6px">17308-A-2118</div><div class="t" style="left:212px;top:451px;font-size:2.6px">BOARDWALK PIPELINE PROJECT ALIGNMENT SHEET</div>
 <div class="t" style="left:178px;top:457px;font-size:2.6px">17308-A-2116</div><div class="t" style="left:212px;top:457px;font-size:2.6px">BOARDWALK PIPELINE PROJECT ALIGNMENT SHEET</div>
 <div class="t" style="left:178px;top:463px;font-size:2.6px">17308-A-2115</div><div class="t" style="left:212px;top:463px;font-size:2.6px">BOARDWALK PIPELINE ALIGNMENT SHEET</div>
 <div class="t" style="left:176px;top:469px;font-size:2.6px">DRAWING NO.</div><div class="t c" style="left:209px;top:469px;width:126px;font-size:2.6px">DESCRIPTION</div>
 <div class="t" style="left:337px;top:463px;font-size:2.6px">A</div><div class="t" style="left:348px;top:463px;font-size:2.6px">ISSUED FOR REVIEW</div>
 <div class="t" style="left:337px;top:469px;font-size:2.6px">No.</div><div class="t c" style="left:344px;top:469px;width:111px;font-size:2.6px">DESCRIPTION</div>
 <div class="t" style="left:456px;top:469px;font-size:2.5px">BY &nbsp;&nbsp;CHK &nbsp;&nbsp;APP &nbsp;&nbsp;&nbsp;DATE</div>
 <div class="hl" style="left:491px;top:444px;width:109px"></div>
 <div class="a disc" style="left:491px;top:429px;width:109px;text-align:center">DISC<span style="color:#2a8ad8">O</span>VERY</div>
 <div class="a zion" style="left:491px;top:449px;width:109px;text-align:center"><span style="color:#1a5ab0">&#9670;</span> ZION ENGINEERING, LLC</div>
 <div class="t c" style="left:491px;top:462px;width:109px;font-size:2.4px;line-height:3px">6000 S. Fiddlers Green Cir., Suite 100<br>Greenwood Village, CO 80111<br>303-xxx-xxxx</div>
 <div class="hl" style="left:600px;top:432px;width:151px"></div>
 <div class="hl" style="left:600px;top:463px;width:151px"></div>
 <div class="vl" style="left:631px;top:463px;height:12px"></div>
 <div class="vl" style="left:728px;top:463px;height:12px"></div>
 <div class="a" style="left:600px;top:423px;width:151px;text-align:center;font-size:7px;font-style:italic;color:#333">DISCOVERY DJ SERVICES, LLC</div>
 <div class="a" style="left:600px;top:434px;width:151px;text-align:center;font-size:4.4px;line-height:7px;color:#222">BOARDWALK PIPELINE PROJECT - PHASE II<br>8" CRUDE OIL PIPELINE<br>ALIGNMENT SHEET<br>STA. 640+00 TO 680+00</div>
 <div class="t" style="left:601px;top:463px;font-size:2px">SCALE</div><div class="t" style="left:632px;top:463px;font-size:2px">DRAWING</div><div class="t" style="left:729px;top:463px;font-size:2px">REV</div>
 <div class="a" style="left:600px;top:467px;width:31px;text-align:center;font-size:4.5px">AS SHOWN</div>
 <div class="a" style="left:631px;top:467px;width:97px;text-align:center;font-size:4.5px">17308-A-2117</div>
 <div class="a" style="left:728px;top:467px;width:23px;text-align:center;font-size:4.5px">A</div>
 <div class="rot" style="left:14px;top:472px;font-size:4px;font-weight:bold">P:\Discovery\Boardwalk\Boardwalk Phase II\Drafting\Alignment Sheets\17308-A-2117.dwg, Print Date 3/1/2018</div>
</div>

<!-- ===================== SHEET 3 (partial) ===================== -->
<div class="sh" style="top:1005px;height:19px">
 <div class="a" style="left:23px;top:1px;width:728px;height:30px;border:1.5px solid #333"></div>
 <div class="vl" style="left:73px;top:1px;height:20px"></div>
 <div class="vl" style="left:79px;top:1px;height:20px"></div>
 <div class="vl" style="left:192px;top:1px;height:15px"></div>
 <div class="vl" style="left:650px;top:1px;height:15px"></div>
 <div class="hl" style="left:23px;top:16px;width:728px"></div>
 <div class="hl" style="left:23px;top:5px;width:50px"></div>
 <div class="hl" style="left:23px;top:9px;width:50px"></div>
 <div class="hl" style="left:23px;top:13px;width:50px"></div>
 <div class="t c" style="left:23px;top:1px;width:50px;font-size:2.5px">BOARDWALK PIPELINE</div>
 <div class="t c" style="left:192px;top:2px;width:458px">BOULEVARD RANCH LLP JIM KASEN ET AL<br>WEDS000014<br>TWP RANGE<br>SEC/TWP/RNG</div>
</div>
</body></html>
